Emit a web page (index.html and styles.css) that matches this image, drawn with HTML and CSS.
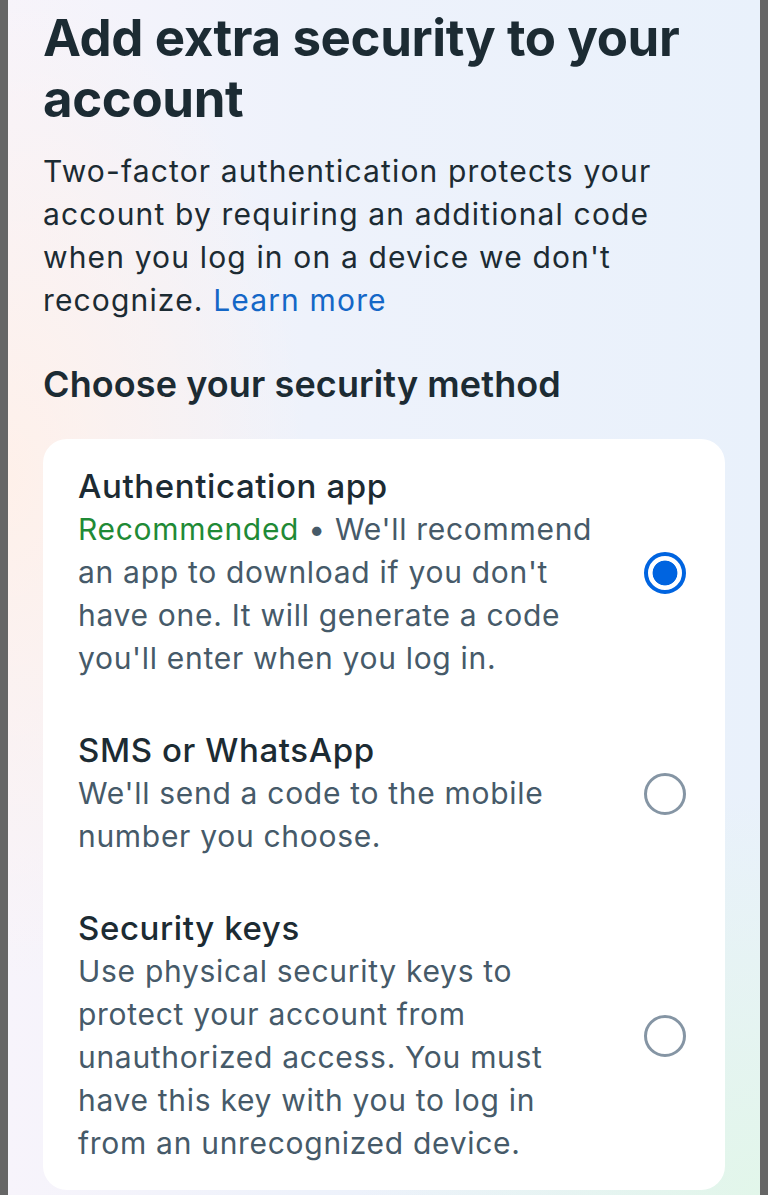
FILE: index.html
```html
<!DOCTYPE html>
<html lang="en">
<head>
<meta charset="utf-8">
<link rel="stylesheet" href="styles.css">
</head>
<body>
<div class="frame">
  <main class="screen">
    <h1 class="title">Add extra security to your account</h1>
    <p class="intro">Two-factor authentication protects your account by requiring an additional code when you log in on a device we don't recognize. <a class="link" href="#">Learn more</a></p>
    <h2 class="subtitle">Choose your security method</h2>
    <section class="card">
      <div class="option">
        <div class="option-text">
          <div class="option-title">Authentication app</div>
          <div class="option-desc"><span class="rec">Recommended</span> • We'll recommend an app to download if you don't have one. It will generate a code you'll enter when you log in.</div>
        </div>
        <span class="radio radio-on"></span>
      </div>
      <div class="option">
        <div class="option-text">
          <div class="option-title">SMS or WhatsApp</div>
          <div class="option-desc">We'll send a code to the mobile number you choose.</div>
        </div>
        <span class="radio"></span>
      </div>
      <div class="option">
        <div class="option-text">
          <div class="option-title">Security keys</div>
          <div class="option-desc">Use physical security keys to protect your account from unauthorized access. You must have this key with you to log in from an unrecognized device.</div>
        </div>
        <span class="radio"></span>
      </div>
    </section>
  </main>
</div>
</body>
</html>
```
FILE: styles.css
```css
html, body {
  margin: 0;
  padding: 0;
}
body {
  width: 768px;
  height: 1195px;
  overflow: hidden;
  font-family: Inter, "Noto Sans", sans-serif;
  color: #1c2b33;
}
.frame {
  height: 1195px;
  border-left: 8px solid #666666;
  border-right: 8px solid #666666;
  box-sizing: border-box;
}
.screen {
  height: 100%;
  box-sizing: border-box;
  padding: 7px 35px 0 35px;
  background:
    radial-gradient(ellipse 300px 500px at 0% 40%, rgba(255, 240, 232, 0.9), rgba(255, 240, 232, 0) 100%),
    radial-gradient(ellipse 400px 400px at 100% 100%, rgba(226, 246, 234, 1), rgba(226, 246, 234, 0) 100%),
    linear-gradient(90deg, #f7f4fb 0%, #eef2fb 40%, #e9f1fb 100%);
}
.title {
  margin: 0;
  font-size: 51px;
  line-height: 61px;
  font-weight: 700;
  letter-spacing: -0.4px;
  color: #1c2b33;
}
.intro {
  margin: 21px 0 0 0;
  font-size: 30px;
  line-height: 43px;
  font-weight: 400;
  letter-spacing: 1.15px;
  color: #1c2b33;
}
.link {
  color: #1467c7;
  text-decoration: none;
}
.subtitle {
  margin: 39px 0 0 0;
  font-size: 36px;
  line-height: 46px;
  font-weight: 600;
  letter-spacing: 0.1px;
  color: #1c2b33;
}
.card {
  margin-top: 32px;
  background: #ffffff;
  border-radius: 24px;
  padding: 2px 39px 0 35px;
}
.option {
  display: flex;
  align-items: center;
  gap: 40px;
  padding: 24px 0 25px;
}
.option-text {
  flex: 1;
}
.option-title {
  font-size: 33px;
  line-height: 43px;
  font-weight: 500;
  letter-spacing: 0.6px;
  color: #1c2b33;
}
.option-desc {
  font-size: 30px;
  line-height: 43px;
  letter-spacing: 0.7px;
  color: #465a69;
}
.rec {
  color: #1f8a36;
}
.radio {
  flex: none;
  width: 42px;
  height: 42px;
  box-sizing: border-box;
  border-radius: 50%;
  border: 3px solid #8595a4;
}
.radio-on {
  border: 4px solid #0064e0;
  background: radial-gradient(circle, #0064e0 0, #0064e0 12px, #ffffff 12.8px);
}
```
